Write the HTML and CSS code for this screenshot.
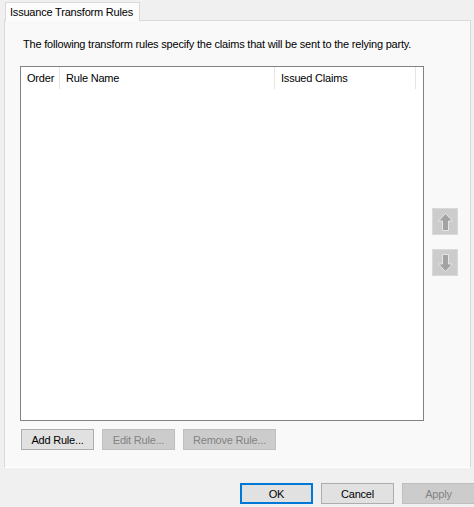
FILE: index.html
```html
<!DOCTYPE html>
<html lang="en">
<head>
    <meta charset="UTF-8">
    <title>Issuance Transform Rules</title>
    <link rel="stylesheet" href="styles.css">
</head>
<body>
    <div class="tabs">
        <div class="tab">Issuance Transform Rules</div>
    </div>
    <div class="panel">
        <p class="intro">The following transform rules specify the claims that will be sent to the relying party.</p>
        <div class="list-row">
            <div class="list">
                <div class="list-head">
                    <div class="col col-order">Order</div>
                    <div class="col col-name">Rule Name</div>
                    <div class="col col-claims">Issued Claims</div>
                </div>
            </div>
            <div class="side">
                <button class="arrow" disabled>
                    <svg width="17" height="20" viewBox="0 0 17 20"><path d="M8.5 1.5 L15.5 9 L11.5 9 L11.5 18.5 L5.5 18.5 L5.5 9 L1.5 9 Z" fill="#a3a3a3" stroke="#e6e6e6" stroke-width="1"/></svg>
                </button>
                <button class="arrow" disabled>
                    <svg width="17" height="20" viewBox="0 0 17 20"><path d="M8.5 18.5 L15.5 11 L11.5 11 L11.5 1.5 L5.5 1.5 L5.5 11 L1.5 11 Z" fill="#a3a3a3" stroke="#e6e6e6" stroke-width="1"/></svg>
                </button>
            </div>
        </div>
        <div class="actions">
            <button class="btn">Add Rule...</button>
            <button class="btn" disabled>Edit Rule...</button>
            <button class="btn btn-wide" disabled>Remove Rule...</button>
        </div>
    </div>
    <div class="footer">
        <button class="btn btn-default">OK</button>
        <button class="btn">Cancel</button>
        <button class="btn" disabled>Apply</button>
    </div>
</body>
</html>
```

FILE: styles.css
```css
body {
    margin: 0;
    width: 474px;
    height: 507px;
    overflow: hidden;
    background-color: #f0f0f0;
    font-family: "Liberation Sans", Arial, sans-serif;
    font-size: 11px;
    letter-spacing: -0.2px;
    color: #000;
}
.tabs {
    display: flex;
    padding: 2px 0 0 5px;
}
.tab {
    height: 18px;
    line-height: 19px;
    padding: 0 6px 0 4px;
    background-color: #fcfcfc;
    border: 1px solid #d9d9d9;
    border-bottom: none;
    margin-bottom: -1px;
    position: relative;
    z-index: 1;
}
.panel {
    margin: 0 3px 0 4px;
    height: 448px;
    box-sizing: border-box;
    background-color: #f9f9f9;
    border: 1px solid #d9d9d9;
    border-bottom-color: #ffffff;
    padding: 0 0 0 15px;
}
.intro {
    margin: 16px 0 0 3px;
    line-height: 14px;
}
.list-row {
    display: flex;
    margin-top: 15px;
}
.list {
    width: 402px;
    height: 353px;
    background-color: #fff;
    border: 1px solid #828282;
}
.list-head {
    display: flex;
    height: 22px;
}
.col {
    line-height: 22px;
    padding-left: 6px;
    border-right: 1px solid #e5e5e5;
}
.col-order {
    width: 32px;
}
.col-name {
    width: 208px;
}
.col-claims {
    width: 134px;
}
.side {
    display: flex;
    flex-direction: column;
    gap: 14px;
    margin: 142px 0 0 8px;
}
.arrow {
    width: 26px;
    height: 27px;
    padding: 0;
    border: 1px solid #d9d9d9;
    background-color: #cccccc;
    display: flex;
    align-items: center;
    justify-content: center;
}
.actions {
    display: flex;
    gap: 8px;
    margin: 8px 0 0 1px;
}
.btn {
    width: 73px;
    height: 21px;
    padding: 0;
    font-family: inherit;
    font-size: 11px;
    letter-spacing: inherit;
    color: #000;
    background-color: #e1e1e1;
    border: 1px solid #adadad;
}
.btn:disabled {
    color: #838383;
    background-color: #cccccc;
    border-color: #bfbfbf;
}
.btn-wide {
    width: 93px;
}
.btn-default {
    border: 2px solid #0078d7;
}
.footer {
    display: flex;
    justify-content: flex-end;
    gap: 8px;
    margin: 15px -1px 0 0;
}
```
